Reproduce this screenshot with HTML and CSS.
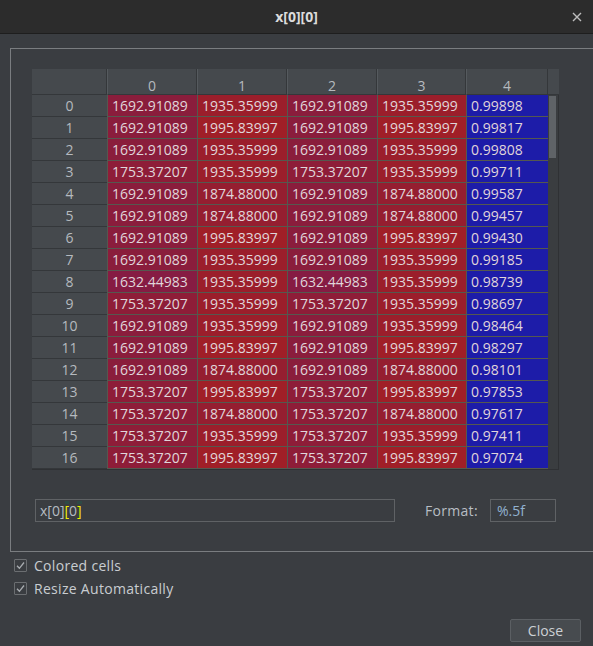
FILE: index.html
```html
<!DOCTYPE html>
<html>
<head>
<meta charset="utf-8">
<link rel="stylesheet" href="styles.css">
</head>
<body>
<div class="titlebar">
  <span class="title">x[0][0]</span>
  <svg class="close-x" width="10" height="10" viewBox="0 0 10 10"><path d="M1 1L9 9M9 1L1 9" stroke="#bdbdbd" stroke-width="1.4"/></svg>
</div>
<div class="content">
  <div class="group">
    <div class="table-wrap">
      <div class="table-area">
        <table class="grid">
          <colgroup>
            <col class="c-vh"><col class="c0"><col class="c1"><col class="c2"><col class="c3"><col class="c4">
          </colgroup>
          <thead>
            <tr><th class="corner"></th><th>0</th><th>1</th><th>2</th><th>3</th><th>4</th></tr>
          </thead>
          <tbody>
            <tr><th>0</th><td class="v1692">1692.91089</td><td class="v1935">1935.35999</td><td class="v1692">1692.91089</td><td class="v1935">1935.35999</td><td class="vb">0.99898</td></tr>
            <tr><th>1</th><td class="v1692">1692.91089</td><td class="v1995">1995.83997</td><td class="v1692">1692.91089</td><td class="v1995">1995.83997</td><td class="vb">0.99817</td></tr>
            <tr><th>2</th><td class="v1692">1692.91089</td><td class="v1935">1935.35999</td><td class="v1692">1692.91089</td><td class="v1935">1935.35999</td><td class="vb">0.99808</td></tr>
            <tr><th>3</th><td class="v1753">1753.37207</td><td class="v1935">1935.35999</td><td class="v1753">1753.37207</td><td class="v1935">1935.35999</td><td class="vb">0.99711</td></tr>
            <tr><th>4</th><td class="v1692">1692.91089</td><td class="v1874">1874.88000</td><td class="v1692">1692.91089</td><td class="v1874">1874.88000</td><td class="vb">0.99587</td></tr>
            <tr><th>5</th><td class="v1692">1692.91089</td><td class="v1874">1874.88000</td><td class="v1692">1692.91089</td><td class="v1874">1874.88000</td><td class="vb">0.99457</td></tr>
            <tr><th>6</th><td class="v1692">1692.91089</td><td class="v1995">1995.83997</td><td class="v1692">1692.91089</td><td class="v1995">1995.83997</td><td class="vb">0.99430</td></tr>
            <tr><th>7</th><td class="v1692">1692.91089</td><td class="v1935">1935.35999</td><td class="v1692">1692.91089</td><td class="v1935">1935.35999</td><td class="vb">0.99185</td></tr>
            <tr><th>8</th><td class="v1632">1632.44983</td><td class="v1935">1935.35999</td><td class="v1632">1632.44983</td><td class="v1935">1935.35999</td><td class="vb">0.98739</td></tr>
            <tr><th>9</th><td class="v1753">1753.37207</td><td class="v1935">1935.35999</td><td class="v1753">1753.37207</td><td class="v1935">1935.35999</td><td class="vb">0.98697</td></tr>
            <tr><th>10</th><td class="v1692">1692.91089</td><td class="v1935">1935.35999</td><td class="v1692">1692.91089</td><td class="v1935">1935.35999</td><td class="vb">0.98464</td></tr>
            <tr><th>11</th><td class="v1692">1692.91089</td><td class="v1995">1995.83997</td><td class="v1692">1692.91089</td><td class="v1995">1995.83997</td><td class="vb">0.98297</td></tr>
            <tr><th>12</th><td class="v1692">1692.91089</td><td class="v1874">1874.88000</td><td class="v1692">1692.91089</td><td class="v1874">1874.88000</td><td class="vb">0.98101</td></tr>
            <tr><th>13</th><td class="v1753">1753.37207</td><td class="v1995">1995.83997</td><td class="v1753">1753.37207</td><td class="v1995">1995.83997</td><td class="vb">0.97853</td></tr>
            <tr><th>14</th><td class="v1753">1753.37207</td><td class="v1874">1874.88000</td><td class="v1753">1753.37207</td><td class="v1874">1874.88000</td><td class="vb">0.97617</td></tr>
            <tr><th>15</th><td class="v1753">1753.37207</td><td class="v1935">1935.35999</td><td class="v1753">1753.37207</td><td class="v1935">1935.35999</td><td class="vb">0.97411</td></tr>
            <tr><th>16</th><td class="v1753">1753.37207</td><td class="v1995">1995.83997</td><td class="v1753">1753.37207</td><td class="v1995">1995.83997</td><td class="vb">0.97074</td></tr>
          </tbody>
        </table>
      </div>
      <div class="scroll-col">
        <div class="scroll-head"></div>
        <div class="scroll-track"><div class="scroll-handle"></div></div>
      </div>
    </div>
    <div class="input-row">
      <div class="slice-input">x[0]<span class="br">[</span>0<span class="br">]</span></div>
      <span class="fmt-label">Format:</span>
      <div class="fmt-input">%.5f</div>
    </div>
  </div>
  <label class="check-row"><span class="checkbox"><svg width="11" height="11" viewBox="0 0 11 11"><path d="M2 5.8L4.4 8.3L9 2.5" fill="none" stroke="#a9adb1" stroke-width="1.3"/></svg></span>Colored cells</label>
  <label class="check-row"><span class="checkbox"><svg width="11" height="11" viewBox="0 0 11 11"><path d="M2 5.8L4.4 8.3L9 2.5" fill="none" stroke="#a9adb1" stroke-width="1.3"/></svg></span>Resize Automatically</label>
  <div class="button-row">
    <div class="btn">Close</div>
  </div>
</div>
</body>
</html>
```

FILE: styles.css
```css
html, body {
  margin: 0;
  padding: 0;
}
body {
  width: 593px;
  height: 646px;
  background: #3a3d41;
  font-family: "Open Sans", "Noto Sans", sans-serif;
  font-size: 14px;
  color: #c9cdd1;
  overflow: hidden;
}
.titlebar {
  height: 33px;
  background: #2c2c2c;
  border-bottom: 1px solid #1e1e1e;
  display: flex;
  align-items: center;
  justify-content: center;
  position: relative;
}
.title {
  font-weight: bold;
  font-size: 14px;
  color: #dcdcdc;
}
.close-x {
  position: absolute;
  right: 11px;
  top: 12px;
}
.content {
  padding: 14px 12px 0 10px;
  display: flex;
  flex-direction: column;
}
.group {
  width: 548px;
  height: 482px;
  border: 1px solid #7a7d80;
  padding: 20px 20px 0 21px;
}
.table-wrap {
  width: 527px;
  height: 401px;
  display: flex;
  background: #3c3f43;
  box-shadow: inset 0 0 0 1px #2f3134;
}
.table-area {
  width: 516px;
  height: 401px;
  overflow: hidden;
}
.grid {
  border-collapse: separate;
  border-spacing: 0;
  table-layout: fixed;
  width: 516px;
  font-size: 14px;
}
.c-vh { width: 75px; }
.c0 { width: 90px; }
.c1 { width: 90px; }
.c2 { width: 90px; }
.c3 { width: 89px; }
.c4 { width: 82px; }
.grid th {
  background: #45494d;
  color: #b5babf;
  font-weight: normal;
  text-align: center;
  padding: 0;
  border-right: 1px solid #34373a;
  border-bottom: 1px solid #34373a;
}
.grid thead th {
  vertical-align: bottom;
  line-height: 17px;
  padding-bottom: 0;
  box-sizing: border-box;
  height: 26px;
  border-left: 1px solid #555a5e;
  border-right: 1px solid #34373a;
}
.grid thead th.corner {
  border-left: none;
}
.grid tbody th {
  height: 21px;
  line-height: 21px;
  border-right: none;
  border-bottom: 1px solid #34373a;
}
.grid td {
  height: 21px;
  line-height: 21px;
  padding: 0 0 0 4px;
  color: #e0d6da;
  white-space: nowrap;
  overflow: hidden;
  border-left: 1px solid #55584f;
  border-bottom: 1px solid #55584f;
}
.v1632 { background: #861c43; }
.v1692 { background: #8a1d3c; }
.v1753 { background: #8e1d38; }
.v1874 { background: #951e30; }
.v1935 { background: #9b1e2b; }
.v1995 { background: #a01f27; }
.vb { background: #1d1ca8; color: #d8d8ea; }
.scroll-col {
  width: 11px;
  display: flex;
  flex-direction: column;
}
.scroll-head {
  height: 26px;
  background: #45494d;
  border-bottom: 1px solid #34373a;
  box-sizing: border-box;
}
.scroll-track {
  height: 374px;
  background: #3a3d40;
  padding: 1px 2px 0 1px;
  box-sizing: border-box;
  border-right: 1px solid #2f3134;
}
.scroll-handle {
  height: 62px;
  background: #5f6367;
}
.input-row {
  margin-top: 29px;
  display: flex;
  align-items: center;
  padding-left: 3px;
}
.slice-input {
  width: 354px;
  height: 21px;
  border: 1px solid #5f6265;
  padding-left: 4px;
  line-height: 21px;
  color: #b5bcc2;
  font-size: 14px;
}
.br {
  color: #f0f000;
  background: linear-gradient(#2e4a46 0 3px, transparent 3px);
}
.fmt-label {
  margin-left: 30px;
  color: #b8bec4;
  font-size: 14px;
  letter-spacing: 0.3px;
}
.fmt-input {
  margin-left: 12px;
  width: 58px;
  height: 21px;
  border: 1px solid #5f6265;
  padding-left: 6px;
  line-height: 21px;
  color: #92b2d0;
  font-size: 14px;
}
.check-row {
  display: flex;
  align-items: center;
  height: 23px;
  padding-left: 4px;
  color: #c9cdd1;
  font-size: 14px;
  letter-spacing: 0.3px;
}
.check-row:first-of-type {
  margin-top: 2px;
}
.checkbox {
  width: 11px;
  height: 11px;
  border: 1px solid #6b6e71;
  border-radius: 1px;
  margin-right: 7px;
  display: flex;
  align-items: center;
  justify-content: center;
}
.button-row {
  display: flex;
  justify-content: flex-end;
  margin-top: 19px;
}
.btn {
  width: 69px;
  height: 21px;
  background: #474b4f;
  border: 1px solid #5b5f63;
  border-radius: 2px;
  text-align: center;
  line-height: 21px;
  color: #cdd1d5;
  font-size: 14px;
}
```
